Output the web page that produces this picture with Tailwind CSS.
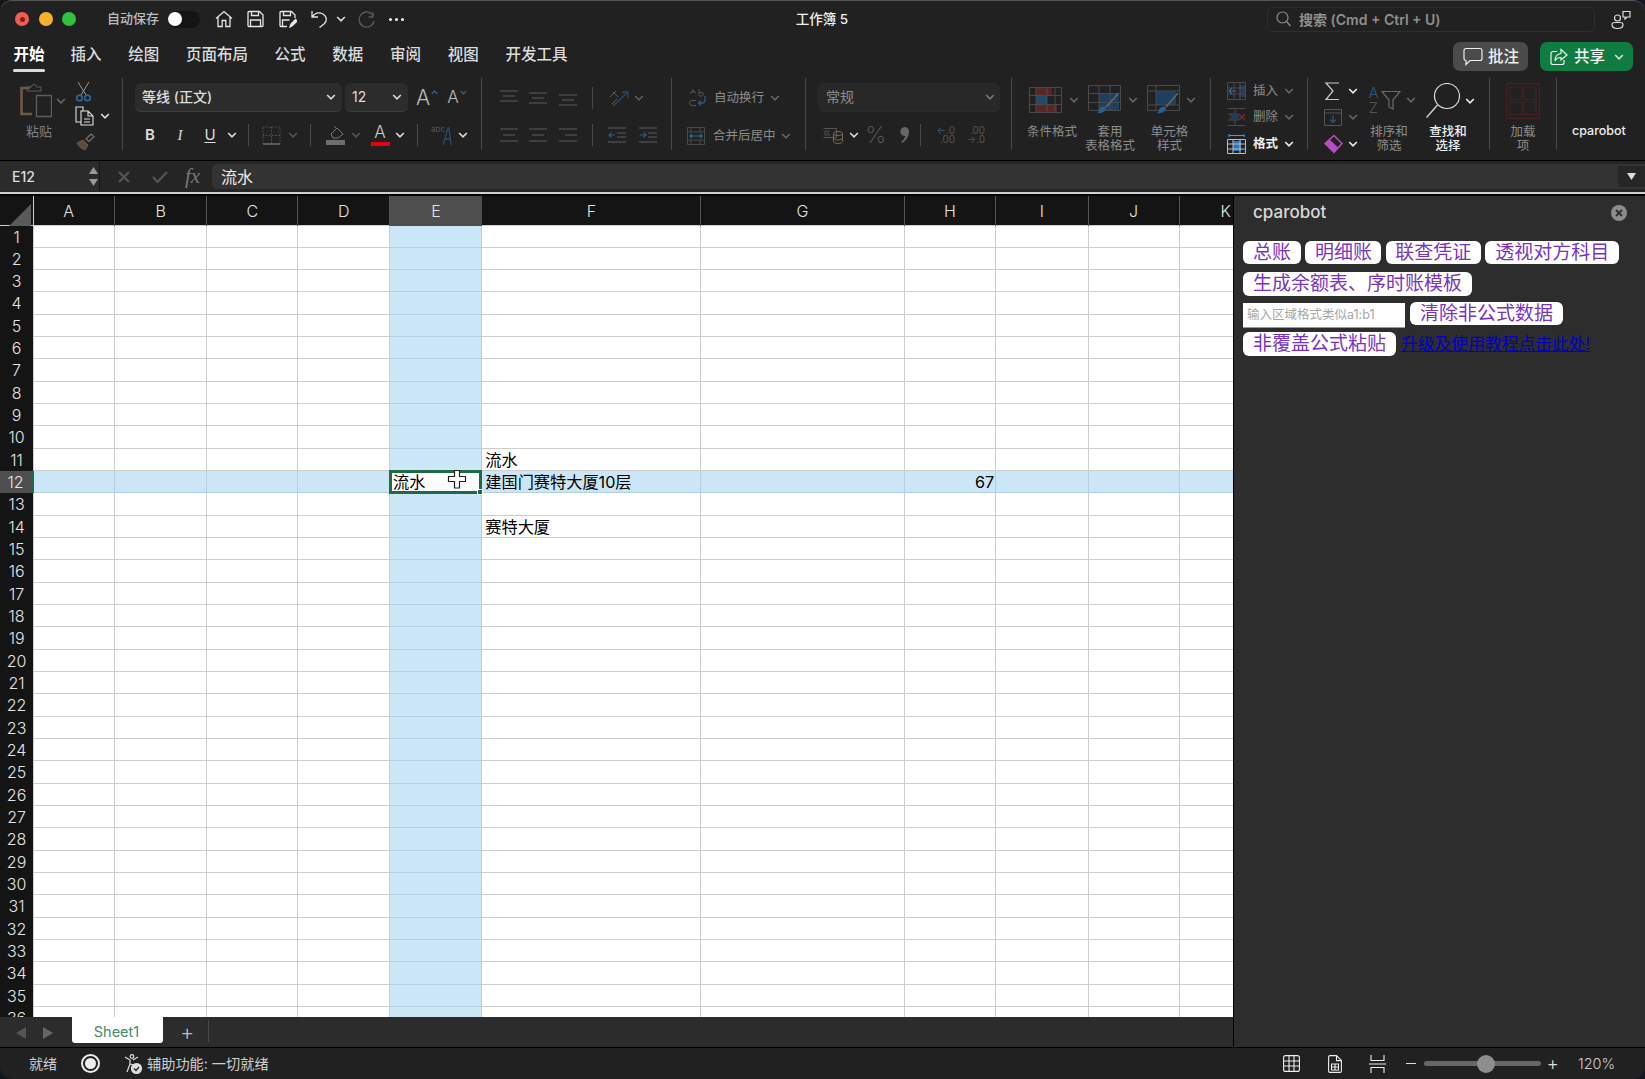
<!DOCTYPE html>
<html lang="zh">
<head>
<meta charset="utf-8">
<title>工作簿 5</title>
<script src="https://cdn.jsdelivr.net/npm/@tailwindcss/browser@4"></script>
</head>
<body class="m-0 overflow-hidden bg-[#10161c]">
<svg class="hidden"><symbol id="c" viewBox="0 0 10 6"><path d="M1.2 1l3.8 3.8L8.8 1" fill="none" stroke="currentColor" stroke-width="1.6"/></symbol>
<symbol id="l3" viewBox="0 0 18 18"><path d="M0 3h18M3 9h12M0 15h18" stroke="currentColor" fill="none"/></symbol></svg>
<div class="flex h-[1079px] w-[1645px] flex-col overflow-hidden rounded-[12px] border-t border-[#555] bg-[#212121] [font-family:Inter,'Noto_Sans_CJK_SC',sans-serif] text-[#ddd]">

<!-- title bar -->
<div class="flex h-[39px] shrink-0 items-center pb-[3px]">
  <div class="flex w-[410px] items-center">
    <span class="ml-[15px] flex h-[14px] w-[14px] items-center justify-center rounded-full bg-[#ec5f55]"><span class="h-[5px] w-[5px] rounded-full bg-[#8c1a10]"></span></span>
    <span class="ml-[9.5px] h-[14px] w-[14px] rounded-full bg-[#f5b22e]"></span>
    <span class="ml-[9.5px] h-[14px] w-[14px] rounded-full bg-[#2fc23f]"></span>
    <span class="ml-[31px] text-[13px] font-medium text-[#bdbdbd]">自动保存</span>
    <span class="ml-[9px] flex h-[17px] w-[32px] items-center rounded-full bg-[#141414]"><span class="h-[14px] w-[14px] rounded-full bg-white"></span></span>
    <svg class="ml-[15px]" width="18" height="18" viewBox="0 0 18 18" fill="none" stroke="#e6e6e6" stroke-width="1.3"><path d="M1 8.5L9 1.5l8 7M3 7v9.5h4.2v-6h3.6v6H15V7"/></svg>
    <svg class="ml-[14px]" width="17" height="18" viewBox="0 0 17 18" fill="none" stroke="#e6e6e6" stroke-width="1.3"><path d="M1 2.5a1 1 0 011-1h10.5L16 5v10.5a1 1 0 01-1 1H2a1 1 0 01-1-1zM4.5 1.5v4h7v-4M3.5 16.5v-6.500h10v6.500"/></svg>
    <svg class="ml-[15px]" width="18" height="18" viewBox="0 0 18 18" fill="none" stroke="#e6e6e6" stroke-width="1.3"><path d="M8 16.500H2a1 1 0 01-1-1V2.500a1 1 0 011-1h10.500L16 5v3M4.500 1.500v4h7v-4M3.500 16v-6h7"/><path d="M11 17l1-3 4.500-4.500 1.500 1.500-4.500 4.500z" fill="#e6e6e6"/></svg>
    <svg class="ml-[14px]" width="18" height="20" viewBox="0 0 18 20" fill="none" stroke="#e6e6e6" stroke-width="1.3"><path d="M1 2v6h6M1.500 7.500C4 4 8 3 12 5c4 2.500 4.500 7 1 10l-4.500 3.500"/></svg>
    <svg class="ml-[7px] text-[#ddd]" width="10" height="6"><use href="#c"/></svg>
    <svg class="ml-[12px]" width="18" height="18" viewBox="0 0 18 18" fill="none" stroke="#5a5a5a" stroke-width="1.3"><path d="M15 2.500V7h-4.500M15.500 6.500A7.500 7.500 0 1016 11"/></svg>
    <span class="ml-[13px] h-[3px] w-[3px] rounded-full bg-[#eee]"></span><span class="ml-[3px] h-[3px] w-[3px] rounded-full bg-[#eee]"></span><span class="ml-[3px] h-[3px] w-[3px] rounded-full bg-[#eee]"></span>
  </div>
  <div class="w-[824px] text-center text-[13.5px] font-medium text-[#eee]">工作簿 5</div>
  <div class="ml-[33px] flex h-[25px] w-[328px] items-center rounded-[5px] border border-[#2e2e2e] pl-[8px] text-[14px] font-semibold text-[#8f8f8f]">
    <svg width="15" height="16" viewBox="0 0 15 16" fill="none" stroke="#8f8f8f" stroke-width="1.2"><circle cx="6.500" cy="6.500" r="5.500"/><path d="M10.500 10.500L14.500 15"/></svg>
    <span class="ml-[8px]">搜索 (Cmd + Ctrl + U)</span>
  </div>
  <svg class="ml-[16px]" width="20" height="21" viewBox="0 0 20 21" fill="none" stroke="#ddd" stroke-width="1.2"><circle cx="6.500" cy="9" r="3"/><path d="M1 15.500c0-1 1-2 3-2h5c2 0 3 1 3 2 0 3-2.500 4-5.500 4S1 18.500 1 15.500zM12 2.500h7v5.500h-3l-2 2V8h-2z"/></svg>
</div>

<!-- tabs -->
<div class="flex h-[35px] shrink-0 items-start text-[15.5px] font-medium text-[#dcdcdc]">
  <div class="ml-[13px] mt-[4px] flex w-[32px] flex-col items-center font-semibold text-white"><span class="whitespace-nowrap leading-[22px]">开始</span><span class="mt-[3px] h-[3px] w-[32px] rounded-full bg-[#dcdcdc]"></span></div>
  <span class="ml-[25.500px] mt-[4px] leading-[22px]">插入</span>
  <span class="ml-[26.700px] mt-[4px] leading-[22px]">绘图</span>
  <span class="ml-[26.700px] mt-[4px] leading-[22px]">页面布局</span>
  <span class="ml-[26.700px] mt-[4px] leading-[22px]">公式</span>
  <span class="ml-[26.700px] mt-[4px] leading-[22px]">数据</span>
  <span class="ml-[26.700px] mt-[4px] leading-[22px]">审阅</span>
  <span class="ml-[26.700px] mt-[4px] leading-[22px]">视图</span>
  <span class="ml-[26.700px] mt-[4px] leading-[22px]">开发工具</span>
  <div class="ml-[886px] mt-[2px] flex h-[29px] w-[75px] items-center justify-center rounded-[7px] bg-[#4b4b4b] text-[#f0f0f0]">
    <svg width="20" height="19" viewBox="0 0 20 19" fill="none" stroke="#eee" stroke-width="1.2"><path d="M3 1.500h14a2 2 0 012 2v8a2 2 0 01-2 2H7l-4 4v-4a2 2 0 01-2-2v-8a2 2 0 012-2z"/></svg>
    <span class="ml-[5px] whitespace-nowrap">批注</span>
  </div>
  <div class="ml-[12px] mt-[2px] flex h-[29px] w-[93px] items-center justify-center rounded-[7px] bg-[#107c41] text-[#f4f4f4]">
    <svg width="18" height="18" viewBox="0 0 18 18" fill="none" stroke="#eee" stroke-width="1.2"><path d="M7 3.500H3a2 2 0 00-2 2v9a2 2 0 002 2h9a2 2 0 002-2V12M11 1.500l6 5.500-6 5V9.500C8 9.500 6 10.500 5 13c0-4 2-7 6-7.500z"/></svg>
    <span class="ml-[6px] whitespace-nowrap">共享</span>
    <svg class="ml-[9px] text-[#ddd]" width="10" height="6"><use href="#c"/></svg>
  </div>
</div>

<!-- ribbon -->
<div class="flex h-[85px] shrink-0 text-[12.5px] leading-[14px] text-[#8c8c8c]">
  <!-- clipboard -->
  <div class="mt-[3px] flex h-[72px] w-[123px] shrink-0 border-r border-[#484848]">
    <div class="ml-[20px] w-[32px] pt-[5px]">
      <svg width="32" height="36" viewBox="0 0 32 36" fill="none"><path d="M10 5H1.500v26H12" stroke="#6e5a44" stroke-width="2.500"/><path d="M7 8V4h4.500a2.500 2.500 0 015 0H21v4z" stroke="#5e5e5e"/><path d="M16.500 12.500h15v21h-15z" stroke="#5e5e5e" stroke-width="1.300"/></svg>
      <div class="ml-[6px] mt-[5px] whitespace-nowrap text-[13px] text-[#7f7f7f]">粘贴</div>
    </div>
    <svg class="ml-[4px] mt-[20px] text-[#666]" width="10" height="6"><use href="#c"/></svg>
    <div class="ml-[9px] w-[40px] text-[#ddd]">
      <svg class="mt-[4px]" width="17" height="20" viewBox="0 0 17 20" fill="none" stroke="#9a9a9a"><path d="M3 0l8 13M14 0L6 13"/><circle cx="4.500" cy="16" r="2.800" stroke="#2e6da4" stroke-width="1.500"/><circle cx="12.500" cy="16" r="2.800" stroke="#2e6da4" stroke-width="1.500"/></svg>
      <div class="mt-[4px] flex items-center">
        <svg width="20" height="20" viewBox="0 0 20 20" fill="none" stroke="#e0e0e0" stroke-width="1.100"><path d="M6 16H1V1h7v4M6 5h7l5 5v9H6zM13 5v5h5M9 13h6M9 16h6"/></svg>
        <svg class="ml-[5px]" width="10" height="6"><use href="#c"/></svg>
      </div>
      <svg class="mt-[7px]" width="20" height="18" viewBox="0 0 20 18" fill="none"><path d="M11 6l5-5 3 2.500-5 5z" stroke="#777" stroke-width="1.100"/><path d="M2 10l6-3 5 5-3 5c-3-1-6-3-8-7z" fill="#5e4c38" stroke="#6e5a44"/></svg>
    </div>
  </div>
  <!-- font -->
  <div class="mt-[3px] h-[72px] w-[359px] shrink-0 border-r border-[#484848]">
    <div class="mt-[5px] flex h-[29px] items-center">
      <div class="ml-[12px] flex h-[29px] w-[207px] items-center justify-between rounded-[6px] border-b border-[#3d3d3d] bg-[#2c2c2c] pl-[7px] pr-[6px] text-[14px] font-medium text-[#ddd]">等线 (正文)<svg width="10" height="6"><use href="#c"/></svg></div>
      <div class="ml-[3px] flex h-[29px] w-[63px] items-center justify-between rounded-[6px] border-b border-[#3d3d3d] bg-[#2c2c2c] pl-[7px] pr-[6px] text-[14px] text-[#ddd]">12<svg width="10" height="6"><use href="#c"/></svg></div>
      <span class="ml-[8px] text-[21px] font-light leading-none text-[#bbb]">A</span>
      <svg class="ml-[1px] mb-[10px] text-[#3d6a90]" width="7" height="5" viewBox="0 0 10 6"><path d="M1 5l4-4 4 4" fill="none" stroke="currentColor" stroke-width="1.600"/></svg>
      <span class="ml-[9px] text-[17px] font-light leading-none text-[#bbb]">A</span>
      <svg class="ml-[1px] mb-[10px] text-[#3d6a90]" width="7" height="5"><use href="#c"/></svg>
    </div>
    <div class="mt-[9px] flex h-[28px] items-center text-[#ddd]">
      <span class="ml-[17px] w-[20px] text-center text-[15px] font-semibold">B</span>
      <span class="ml-[10px] w-[20px] text-center text-[15px] italic [font-family:'Liberation_Serif',serif]">I</span>
      <span class="ml-[10px] w-[20px] text-center text-[15px] underline underline-offset-2">U</span>
      <svg class="ml-[7px]" width="10" height="6"><use href="#c"/></svg>
      <span class="ml-[11px] h-[22px] w-px bg-[#484848]"></span>
      <svg class="ml-[13px]" width="19" height="19" viewBox="0 0 19 19" fill="none" stroke="#555"><path d="M1 1h17v17H1zM9.500 1v17M1 9.500h17" stroke-dasharray="1.500 1.500"/><path d="M1 18h17" stroke-width="1.500" stroke="#6a6a6a" stroke-dasharray="none"/></svg>
      <svg class="ml-[7px] text-[#555]" width="10" height="6"><use href="#c"/></svg>
      <span class="ml-[12px] h-[22px] w-px bg-[#484848]"></span>
      <svg class="ml-[15px]" width="19" height="20" viewBox="0 0 19 20" fill="none"><path d="M5 9l6-6 6 6-5 4H7z" stroke="#777"/><path d="M8 1l3 3" stroke="#777"/><rect y="15" width="19" height="5" fill="#6e6e6e"/></svg>
      <svg class="ml-[6px] text-[#555]" width="10" height="6"><use href="#c"/></svg>
      <div class="ml-[9px] flex w-[20px] flex-col items-center"><span class="text-[17px] font-light leading-[15px] text-[#ccc]">A</span><span class="mt-[2px] h-[4px] w-[19px] bg-[#e8000e]"></span></div>
      <svg class="ml-[5px]" width="10" height="6"><use href="#c"/></svg>
      <span class="ml-[12px] h-[22px] w-px bg-[#484848]"></span>
      <div class="ml-[14px] flex h-[22px] w-[20px] items-start justify-end text-[8px] leading-[10px] text-[#555]">abc<svg class="mt-[3px] -ml-[3px] shrink-0" width="10" height="18" viewBox="0 0 10 18" fill="none" stroke="#2a4a66" stroke-width="1.300"><path d="M1 18L6 1h1l2 17M3 12h6"/></svg></div>
      <svg class="ml-[6px]" width="10" height="6"><use href="#c"/></svg>
    </div>
  </div>
  <!-- align -->
  <div class="mt-[3px] h-[72px] w-[190px] shrink-0 border-r border-[#484848] text-[#5c5c5c]">
    <div class="mt-[5px] flex h-[29px] items-center">
      <svg class="ml-[18px]" width="18" height="18" viewBox="0 0 18 18" fill="none" stroke="currentColor"><path d="M0 2h18M3 7h12M0 12h18"/></svg>
      <svg class="ml-[11px]" width="18" height="18" viewBox="0 0 18 18" fill="none" stroke="currentColor"><path d="M0 4h18M3 9h12M0 14h18"/></svg>
      <svg class="ml-[12px]" width="18" height="18" viewBox="0 0 18 18" fill="none" stroke="currentColor"><path d="M0 6h18M3 11h12M0 16h18"/></svg>
      <span class="ml-[15px] h-[22px] w-px bg-[#484848]"></span>
      <svg class="ml-[16px]" width="20" height="20" viewBox="0 0 20 20" fill="none" stroke="#5c5c5c"><path d="M1 9l6-6M4 4l5 5M3 16l5-5" /><path d="M4 18L18 5M13 4h6v6" stroke="#2a4a66" stroke-width="1.300"/></svg>
      <svg class="ml-[5px]" width="10" height="6"><use href="#c"/></svg>
    </div>
    <div class="mt-[9px] flex h-[28px] items-center">
      <svg class="ml-[18px]" width="18" height="18"><use href="#l3"/></svg>
      <svg class="ml-[11px]" width="18" height="18" viewBox="0 0 18 18" fill="none" stroke="currentColor"><path d="M0 3h18M3 9h12M0 15h18"/></svg>
      <svg class="ml-[12px]" width="18" height="18" viewBox="0 0 18 18" fill="none" stroke="currentColor"><path d="M0 3h18M6 9h12M0 15h18"/></svg>
      <span class="ml-[15px] h-[22px] w-px bg-[#484848]"></span>
      <svg class="ml-[15px]" width="18" height="18" viewBox="0 0 18 18" fill="none" stroke="currentColor"><path d="M0 2h18M9 7h9M9 11h9M0 16h18"/><path d="M7 9H1M3.500 6.500L1 9l2.500 2.500" stroke="#2e5a80" stroke-width="1.200"/></svg>
      <svg class="ml-[13px]" width="18" height="18" viewBox="0 0 18 18" fill="none" stroke="currentColor"><path d="M0 2h18M9 7h9M9 11h9M0 16h18"/><path d="M1 9h6M4.500 6.500L7 9l-2.500 2.500" stroke="#2e5a80" stroke-width="1.200"/></svg>
    </div>
  </div>
  <!-- wrap -->
  <div class="mt-[3px] h-[72px] w-[133.500px] shrink-0 border-r border-[#484848] text-[#8c8c8c]">
    <div class="mt-[5px] flex h-[29px] items-center">
      <svg class="ml-[16px] shrink-0" width="19" height="20" viewBox="0 0 19 20" fill="none" stroke="#555"><path d="M2 5.500l3-4 3 4M3 4h4" /><path d="M11 1v7M11 4.500h3a1.800 1.800 0 010 3.500h-3M8 12.500H4a2.500 2.500 0 000 5h4"/><path d="M17 8v4a3 3 0 01-3 3h-3M13 12.500L10.500 15l2.500 2.500" stroke="#2a5a80" stroke-width="1.300"/></svg>
      <span class="ml-[7px] w-[50px] whitespace-nowrap">自动换行</span>
      <svg class="ml-[6px] shrink-0 text-[#666]" width="10" height="6"><use href="#c"/></svg>
    </div>
    <div class="mt-[10px] flex h-[28px] items-center">
      <svg class="ml-[15px]" width="18" height="18" viewBox="0 0 18 18" fill="none" stroke="#4a4a4a"><path d="M.5.500h17v17H.5zM0 5h18M0 13h18M4 0v5M13 0v5M4 13v5M13 13v5"/><path d="M3 9h12M5 7L3 9l2 2M13 7l2 2-2 2" stroke="#2e6da4" stroke-width="1.200"/></svg>
      <span class="ml-[8px] w-[63px] whitespace-nowrap">合并后居中</span>
      <svg class="ml-[5px] text-[#666]" width="10" height="6"><use href="#c"/></svg>
    </div>
  </div>
  <!-- number -->
  <div class="mt-[3px] h-[72px] w-[206.500px] shrink-0 border-r border-[#484848]">
    <div class="mt-[5px] flex h-[29px] items-center">
      <div class="ml-[12.500px] flex h-[29px] w-[182px] items-center justify-between rounded-[6px] border-b border-[#2c2c2c] bg-[#282828] pl-[8px] pr-[5px] text-[14px] text-[#8c8c8c]">常规<svg class="text-[#777]" width="10" height="6"><use href="#c"/></svg></div>
    </div>
    <div class="mt-[9px] flex h-[28px] items-center">
      <svg class="ml-[17px]" width="20" height="18" viewBox="0 0 20 18" fill="none"><path d="M.5 2.500h13v9H.5" stroke="#555"/><path d="M4 5H2v4h2M7 5H5v4h2" stroke="#555"/><ellipse cx="15" cy="7.500" rx="4.500" ry="2" stroke="#7c6a48"/><path d="M10.500 7.500v8c0 1 2 2 4.500 2s4.500-1 4.500-2v-8M10.500 12c0 1 2 2 4.500 2s4.500-1 4.500-2" stroke="#7c6a48"/></svg>
      <svg class="ml-[6px] text-[#ddd]" width="10" height="6"><use href="#c"/></svg>
      <span class="ml-[7px] text-[23px] font-extralight leading-none text-[#5f5f5f]">%</span>
      <svg class="ml-[14px]" width="10" height="16" viewBox="0 0 10 16"><path d="M4.500 0a4.500 4.500 0 014.500 4.500C9 9.500 6 14 2 16l-.8-1C3.500 13 5 11 5.300 9A4.500 4.500 0 114.500 0z" fill="#666"/></svg>
      <span class="ml-[10px] h-[22px] w-px bg-[#484848]"></span>
      <div class="ml-[14px] w-[20px] whitespace-nowrap text-right text-[10px] leading-[9px] text-[#555]"><span class="text-[#2e5a80]">←</span>.0<br>.00</div>
      <div class="ml-[10px] w-[20px] whitespace-nowrap text-right text-[10px] leading-[9px] text-[#555]">.00<br><span class="text-[#2e5a80]">→</span>.0</div>
    </div>
  </div>
  <!-- styles -->
  <div class="mt-[3px] flex h-[72px] w-[199px] shrink-0 border-r border-[#484848] text-center">
    <div class="ml-[10px] w-[60px]">
      <div class="mt-[9px] flex h-[26px] items-center">
        <svg class="ml-[7px] shrink-0" width="33" height="26" viewBox="0 0 33 26" fill="none" stroke="#4a4a4a"><path fill="#5a2623" stroke="none" d="M7 0h16v9H7zM7 17h21v9H7z"/><path fill="#244a6a" stroke="none" d="M7 9h11v8H7z"/><path d="M.5.500h32v25H.5zM0 8.500h33M0 17.500h33M7 0v26M18 0v26M26 0v26"/></svg>
        <svg class="ml-[7px] shrink-0 text-[#666]" width="10" height="6"><use href="#c"/></svg>
      </div>
      <div class="mt-[12px] whitespace-nowrap">条件格式</div>
    </div>
    <div class="w-[56px]">
      <div class="mt-[9px] flex h-[26px] items-center">
        <svg class="ml-[6px] shrink-0" width="33" height="30" viewBox="0 0 33 30" fill="none" stroke="#4a4a4a"><path fill="#1d3f60" stroke="none" d="M11 9h20v17H11z"/><path d="M.5.500h32v25H.5zM0 8.500h33M0 17.500h33M11 0v26M22 0v26"/><path d="M30 9L18 22" stroke="#6a6a6a" stroke-width="1.500"/><path d="M11 24c3-3 6-3 7-1 0 3-4 6-9 5 2-1 2-2 2-4z" fill="#28608f" stroke="none"/></svg>
        <svg class="ml-[7px] shrink-0 text-[#666]" width="10" height="6"><use href="#c"/></svg>
      </div>
      <div class="mt-[12px] whitespace-nowrap">套用<br>表格格式</div>
    </div>
    <div class="ml-[3px] w-[57px]">
      <div class="mt-[9px] flex h-[26px] items-center">
        <svg class="ml-[6px] shrink-0" width="34" height="30" viewBox="0 0 34 30" fill="none" stroke="#4a4a4a"><path fill="#1d3f60" stroke="none" d="M9 6h20v14H9z"/><path d="M.5.500h32v25H.5zM0 6h33M9 0v26M0 20h33"/><path d="M31 8L19 22" stroke="#6a6a6a" stroke-width="1.500"/><path d="M12 24c3-3 6-3 7-1 0 3-4 6-9 5 2-1 2-2 2-4z" fill="#28608f" stroke="none"/></svg>
        <svg class="ml-[5px] shrink-0 text-[#666]" width="10" height="6"><use href="#c"/></svg>
      </div>
      <div class="mt-[12px] whitespace-nowrap">单元格<br>样式</div>
    </div>
  </div>
  <!-- cells -->
  <div class="mt-[3px] h-[72px] w-[97px] shrink-0 border-r border-[#484848]">
    <div class="flex h-[26px] items-center">
      <svg class="ml-[16px]" width="19" height="18" viewBox="0 0 19 18" fill="none" stroke="#4a4a4a"><path fill="#1f3d58" stroke="none" d="M12 3h6v12h-6z"/><path d="M.5.500h18v17H.5zM0 6h19M0 12h19M7 0v18M13 0v18"/><path d="M10 9H2M5 6L2 9l3 3" stroke="#2e6da4" stroke-width="1.200"/></svg>
      <span class="ml-[7px] w-[26px] whitespace-nowrap">插入</span>
      <svg class="ml-[5px] text-[#666]" width="10" height="6"><use href="#c"/></svg>
    </div>
    <div class="flex h-[26px] items-center">
      <svg class="ml-[16px]" width="19" height="18" viewBox="0 0 19 18" fill="none" stroke="#4a4a4a"><path d="M.5.500h18M.5 17.500h18M.5 6h11M.5 12h11M4 6v6M8 0v6M8 12v6"/><path fill="#1f3d58" stroke="none" d="M5 6h7v6H5z"/><path d="M12 6l6 6M18 6l-6 6" stroke="#7c2c28" stroke-width="1.300"/></svg>
      <span class="ml-[7px] w-[26px] whitespace-nowrap">删除</span>
      <svg class="ml-[5px] text-[#666]" width="10" height="6"><use href="#c"/></svg>
    </div>
    <div class="mt-[1px] flex h-[26px] items-center font-semibold text-[#eee]">
      <svg class="ml-[16px]" width="19" height="20" viewBox="0 0 19 20" fill="none" stroke="#bbb"><path fill="#1c78c8" stroke="none" d="M6 7h8v10H6z"/><path d="M.5 5.500h18v14H.5zM0 10h19M0 15h19M6 5v15M13 5v15"/><path d="M2 1.500h15M2 0v3M17 0v3" stroke="#3aa0e0"/></svg>
      <span class="ml-[7px] w-[26px] whitespace-nowrap">格式</span>
      <svg class="ml-[5px] text-[#eee]" width="10" height="6"><use href="#c"/></svg>
    </div>
  </div>
  <!-- editing -->
  <div class="mt-[3px] flex h-[72px] w-[182px] shrink-0 border-r border-[#484848]">
    <div class="ml-[15px]">
      <div class="flex h-[26px] items-center"><svg width="20" height="19" viewBox="0 0 20 19" fill="none" stroke="#ccc" stroke-width="1.200"><path d="M16 1H3l7 8-7 8.500h13"/></svg><svg class="ml-[5px] text-[#eee]" width="10" height="6"><use href="#c"/></svg></div>
      <div class="flex h-[26px] items-center"><svg width="20" height="19" viewBox="0 0 20 19" fill="none" stroke="#555"><path d="M1.500 1.500h17v16h-17zM1 5h18"/><path d="M10 7.500v7M7 11.500l3 3 3-3" stroke="#2e5a80" stroke-width="1.200"/></svg><svg class="ml-[5px] text-[#666]" width="10" height="6"><use href="#c"/></svg></div>
      <div class="mt-[1px] flex h-[26px] items-center"><svg width="20" height="20" viewBox="0 0 20 20" fill="none"><path d="M11 1.500l8 8-8 9-9-9z" stroke="#b84fc0" stroke-width="1.500"/><path d="M6.500 5.500l8.500 8-4 5-9-9z" fill="#b84fc0"/></svg><svg class="ml-[5px] text-[#eee]" width="10" height="6"><use href="#c"/></svg></div>
    </div>
    <div class="ml-[4px] w-[54px] text-center">
      <div class="mt-[7px] flex h-[30px] items-center">
        <div class="ml-[5px] w-[13px] text-center text-[15px] font-light leading-[15px] text-[#555]"><span class="text-[#2e5a80]">A</span><br>Z</div>
        <svg class="ml-[1px]" width="20" height="20" viewBox="0 0 20 20" fill="none" stroke="#6a6a6a" stroke-width="1.200"><path d="M1 1.500h18L12 10v9l-4-2v-7z"/></svg>
        <svg class="ml-[5px] text-[#666]" width="10" height="6"><use href="#c"/></svg>
      </div>
      <div class="mt-[10px] whitespace-nowrap">排序和<br>筛选</div>
    </div>
    <div class="ml-[4px] w-[56px] text-center font-medium text-[#eee]">
      <div class="mt-[5px] flex h-[35px] items-start">
        <svg class="ml-[6px] shrink-0" width="34" height="35" viewBox="0 0 34 35" fill="none" stroke="#ddd" stroke-width="1.200"><circle cx="21" cy="13" r="12.500"/><path d="M11.500 22L.5 34.500"/></svg>
        <svg class="ml-[5px] mt-[15px] shrink-0" width="10" height="6"><use href="#c"/></svg>
      </div>
      <div class="mt-[7px] whitespace-nowrap">查找和<br>选择</div>
    </div>
  </div>
  <!-- add-in -->
  <div class="mt-[3px] h-[72px] w-[67px] shrink-0 border-r border-[#484848] text-center">
    <svg class="ml-[16px] mt-[5px]" width="34" height="36" viewBox="0 0 34 36" fill="none" stroke="#46221f" stroke-width="1.200"><path d="M.6.600h32.800v34.800H.6zM4 4h12v12.500H4zM18 4h12v12.500H18zM4 19h12v12.500H4zM18 19h12v12.500H18z"/></svg>
    <div class="mt-[6px] whitespace-nowrap">加载<br>项</div>
  </div>
  <div class="mt-[3px] h-[72px] pl-[15px] text-[12.5px] font-medium text-[#eee]"><div class="mt-[46px]">cparobot</div></div>
</div>

<div class="h-px shrink-0 bg-black"></div>

<!-- formula bar -->
<div class="flex h-[31px] shrink-0 items-center bg-[#252525]">
  <div class="flex h-[29px] w-[100px] shrink-0 items-center justify-between border-r border-[#141414] bg-[#2b2b2b] pl-[12px] pr-[1px] text-[14px] font-medium text-[#ddd]">
    E12
    <div class="flex flex-col gap-[5px]"><svg width="9" height="7" viewBox="0 0 9 7"><path d="M4.500 0l4.500 7H0z" fill="#999"/></svg><svg width="9" height="7" viewBox="0 0 9 7"><path d="M4.500 7L0 0h9z" fill="#999"/></svg></div>
  </div>
  <svg class="ml-[18px]" width="12" height="12" viewBox="0 0 12 12" stroke="#555" stroke-width="2.200"><path d="M1 1l10 10M11 1L1 11"/></svg>
  <svg class="ml-[22px]" width="16" height="12" viewBox="0 0 16 12" fill="none" stroke="#555" stroke-width="2.200"><path d="M1 6l4.500 5L15 1"/></svg>
  <span class="ml-[17px] w-[17px] text-[21px] italic text-[#777] [font-family:'Liberation_Serif',serif]">fx</span>
  <div class="ml-[10px] flex h-[25px] min-w-0 flex-1 items-center rounded-l-[5px] bg-[#333] pl-[9px] text-[16px] text-[#eee]">流水
    <div class="ml-auto flex h-[21px] w-[27px] items-center justify-center bg-[#262626]"><svg width="9" height="7" viewBox="0 0 9 7"><path d="M4.500 7L0 0h9z" fill="#ddd"/></svg></div>
  </div>
</div>
<div class="h-[2px] shrink-0 bg-[#cfcfcf]"></div>
<div class="h-[1.500px] shrink-0 bg-black"></div>

<!-- main -->
<div class="flex min-h-0 flex-1">
  <div class="flex w-[1233px] shrink-0 flex-col overflow-hidden">
    <div class="h-[821.500px] shrink-0 overflow-hidden bg-white text-black">
      <!-- column headers -->
      <div class="grid h-[30px] w-[1271px] grid-cols-[34.200px_80.900px_92.300px_91.100px_91.500px_92.300px_219.200px_203.200px_91.600px_92.400px_91px_92px] border-b border-[#cfcfcf] bg-[#141414] text-center text-[16px] font-light leading-[31px] text-[#e4e4e4]">
        <div class="flex items-end justify-end border-r border-[#cfcfcf] pb-[2px] pr-[2px]"><svg width="24" height="24" viewBox="0 0 24 24"><path d="M24 0v24H0z" fill="#5a5a5a"/></svg></div>
        <div class="border-r border-[#555] pr-[11px]">A</div><div class="border-r border-[#555]">B</div><div class="border-r border-[#555]">C</div><div class="border-r border-[#555]">D</div>
        <div class="border-b-[3px] border-[#1e6b45] bg-[#4e4e4e]">E</div>
        <div class="border-r border-[#555]">F</div><div class="border-r border-[#555]">G</div><div class="border-r border-[#555]">H</div><div class="border-r border-[#555]">I</div><div class="border-r border-[#555]">J</div><div>K</div>
      </div>
      <!-- cells -->
      <div class="relative grid w-[1271px] grid-cols-[34.200px_80.900px_92.300px_91.100px_91.500px_92.300px_219.200px_203.200px_91.600px_92.400px_91px_92px] auto-rows-[22.340px] overflow-hidden whitespace-nowrap text-[16.200px] leading-[22px] [&>*]:border-r [&>*]:border-b [&>*]:border-[#cecece] [&>*:nth-child(12n+1)]:border-b-0 [&>*:nth-child(12n+1)]:border-r-[#cfcfcf] [&>*:nth-child(12n+1)]:bg-[#141414] [&>*:nth-child(12n+1)]:text-center [&>*:nth-child(12n+1)]:text-[16px] [&>*:nth-child(12n+1)]:font-light [&>*:nth-child(12n+1)]:text-[#e4e4e4] [&>*:nth-child(12n+6)]:border-[#b0d0e6] [&>*:nth-child(12n+6)]:bg-[#cbe6f7] [&>*:nth-child(n+134):nth-child(-n+144)]:border-[#b0d0e6] [&>*:nth-child(n+134):nth-child(-n+144)]:bg-[#cbe6f7]">
        <p>1</p><p></p><p></p><p></p><p></p><p></p><p></p><p></p><p></p><p></p><p></p><p></p>
        <p>2</p><p></p><p></p><p></p><p></p><p></p><p></p><p></p><p></p><p></p><p></p><p></p>
        <p>3</p><p></p><p></p><p></p><p></p><p></p><p></p><p></p><p></p><p></p><p></p><p></p>
        <p>4</p><p></p><p></p><p></p><p></p><p></p><p></p><p></p><p></p><p></p><p></p><p></p>
        <p>5</p><p></p><p></p><p></p><p></p><p></p><p></p><p></p><p></p><p></p><p></p><p></p>
        <p>6</p><p></p><p></p><p></p><p></p><p></p><p></p><p></p><p></p><p></p><p></p><p></p>
        <p>7</p><p></p><p></p><p></p><p></p><p></p><p></p><p></p><p></p><p></p><p></p><p></p>
        <p>8</p><p></p><p></p><p></p><p></p><p></p><p></p><p></p><p></p><p></p><p></p><p></p>
        <p>9</p><p></p><p></p><p></p><p></p><p></p><p></p><p></p><p></p><p></p><p></p><p></p>
        <p>10</p><p></p><p></p><p></p><p></p><p></p><p></p><p></p><p></p><p></p><p></p><p></p>
        <p>11</p><p></p><p></p><p></p><p></p><p></p><p class="pl-[3px]">流水</p><p></p><p></p><p></p><p></p><p></p>
        <p class="bg-[#4e4e4e]! border-r-[3px]! border-r-[#1e6b45]!">12</p><p></p><p></p><p></p><p></p><p class="relative z-10 -ml-px -mt-px h-[24px]! border-[3px]! border-[#1e6b45]! bg-white! pl-[1px] leading-[19px]!">流水<span class="absolute -bottom-[3.500px] -right-[3.500px] h-[6px] w-[6px] border border-white bg-[#1e6b45]"></span><svg class="absolute left-[55px] top-[-4px]" width="20" height="20" viewBox="0 0 20 20"><path d="M7.500 1.500h5v6h6v5h-6v6.500h-5v-6.500h-6v-5h6z" fill="#fff" stroke="#222" stroke-width="1.200"/></svg></p><p class="pl-[3px]">建国门赛特大厦10层</p><p></p><p class="pr-[1px] text-right">67</p><p></p><p></p><p></p>
        <p>13</p><p></p><p></p><p></p><p></p><p></p><p></p><p></p><p></p><p></p><p></p><p></p>
        <p>14</p><p></p><p></p><p></p><p></p><p></p><p class="pl-[3px]">赛特大厦</p><p></p><p></p><p></p><p></p><p></p>
        <p>15</p><p></p><p></p><p></p><p></p><p></p><p></p><p></p><p></p><p></p><p></p><p></p>
        <p>16</p><p></p><p></p><p></p><p></p><p></p><p></p><p></p><p></p><p></p><p></p><p></p>
        <p>17</p><p></p><p></p><p></p><p></p><p></p><p></p><p></p><p></p><p></p><p></p><p></p>
        <p>18</p><p></p><p></p><p></p><p></p><p></p><p></p><p></p><p></p><p></p><p></p><p></p>
        <p>19</p><p></p><p></p><p></p><p></p><p></p><p></p><p></p><p></p><p></p><p></p><p></p>
        <p>20</p><p></p><p></p><p></p><p></p><p></p><p></p><p></p><p></p><p></p><p></p><p></p>
        <p>21</p><p></p><p></p><p></p><p></p><p></p><p></p><p></p><p></p><p></p><p></p><p></p>
        <p>22</p><p></p><p></p><p></p><p></p><p></p><p></p><p></p><p></p><p></p><p></p><p></p>
        <p>23</p><p></p><p></p><p></p><p></p><p></p><p></p><p></p><p></p><p></p><p></p><p></p>
        <p>24</p><p></p><p></p><p></p><p></p><p></p><p></p><p></p><p></p><p></p><p></p><p></p>
        <p>25</p><p></p><p></p><p></p><p></p><p></p><p></p><p></p><p></p><p></p><p></p><p></p>
        <p>26</p><p></p><p></p><p></p><p></p><p></p><p></p><p></p><p></p><p></p><p></p><p></p>
        <p>27</p><p></p><p></p><p></p><p></p><p></p><p></p><p></p><p></p><p></p><p></p><p></p>
        <p>28</p><p></p><p></p><p></p><p></p><p></p><p></p><p></p><p></p><p></p><p></p><p></p>
        <p>29</p><p></p><p></p><p></p><p></p><p></p><p></p><p></p><p></p><p></p><p></p><p></p>
        <p>30</p><p></p><p></p><p></p><p></p><p></p><p></p><p></p><p></p><p></p><p></p><p></p>
        <p>31</p><p></p><p></p><p></p><p></p><p></p><p></p><p></p><p></p><p></p><p></p><p></p>
        <p>32</p><p></p><p></p><p></p><p></p><p></p><p></p><p></p><p></p><p></p><p></p><p></p>
        <p>33</p><p></p><p></p><p></p><p></p><p></p><p></p><p></p><p></p><p></p><p></p><p></p>
        <p>34</p><p></p><p></p><p></p><p></p><p></p><p></p><p></p><p></p><p></p><p></p><p></p>
        <p>35</p><p></p><p></p><p></p><p></p><p></p><p></p><p></p><p></p><p></p><p></p><p></p>
        <p>36</p><p></p><p></p><p></p><p></p><p></p><p></p><p></p><p></p><p></p><p></p><p></p>
      </div>
    </div>
    <!-- sheet tabs -->
    <div class="flex min-h-0 flex-1 items-start bg-[#2c2c2c] text-[15px]">
      <svg class="ml-[16px] mt-[10px]" width="10" height="12" viewBox="0 0 10 12"><path d="M10 0v12L0 6z" fill="#555"/></svg>
      <svg class="ml-[17px] mt-[10px]" width="10" height="12" viewBox="0 0 10 12"><path d="M0 0v12l10-6z" fill="#666"/></svg>
      <div class="ml-[19px] flex h-[26px] w-[91px] items-center justify-center rounded-b-[3px] bg-white pr-[2px] pt-[4px] text-[14.500px] text-[#4a8a6c]">Sheet1</div>
      <span class="ml-[17px] mt-[4px] text-[22px] font-light leading-[22px] text-[#bbb]">+</span>
      <span class="ml-[14px] mt-[3px] h-[22px] w-px bg-[#484848]"></span>
    </div>
  </div>
  <!-- task pane -->
  <div class="min-w-0 flex-1 border-l border-black bg-[#2d2d2d] pl-[9px]">
    <div class="flex h-[35px] items-center pl-[10px] pr-[18px] text-[17px] font-medium text-[#d8d8d8]">cparobot
      <span class="ml-auto flex h-[16px] w-[16px] items-center justify-center rounded-full bg-[#8c8c8c]"><svg width="8" height="8" viewBox="0 0 8 8" stroke="#2d2d2d" stroke-width="1.800"><path d="M1 1l6 6M7 1L1 7"/></svg></span>
    </div>
    <div class="mt-[10px] flex h-[23px] gap-[4.400px] text-[19px] leading-[23px] text-[#7a34c2]">
      <span class="rounded-[6px] bg-white px-[10px]">总账</span><span class="rounded-[6px] bg-white px-[9.500px]">明细账</span><span class="rounded-[6px] bg-white px-[9.500px]">联查凭证</span><span class="rounded-[6px] bg-white px-[10px]">透视对方科目</span>
    </div>
    <div class="mt-[8px] flex h-[24px] text-[19px] leading-[24px] text-[#7a34c2]">
      <span class="rounded-[6px] bg-white px-[10px]">生成余额表、序时账模板</span>
    </div>
    <div class="mt-[6px] flex h-[26px] items-start gap-[5px] text-[19px] leading-[23px] text-[#7a34c2]">
      <div class="mt-[1px] flex h-[25px] w-[162px] items-center border-b border-[#999] bg-white pl-[4px] text-[12.500px] text-[#a8a8a8]">输入区域格式类似a1:b1</div>
      <span class="rounded-[6px] bg-white px-[10px]">清除非公式数据</span>
    </div>
    <div class="mt-[4px] flex h-[24px] items-center text-[19px] leading-[24px]">
      <span class="rounded-[6px] bg-white px-[10px] text-[#7a34c2]">非覆盖公式粘贴</span>
      <a class="ml-[5px] whitespace-nowrap text-[16.800px] text-[#0000c8] underline" href="#">升级及使用教程点击此处!</a>
    </div>
  </div>
</div>

<div class="h-px shrink-0 bg-black"></div>

<!-- status bar -->
<div class="flex h-[31px] shrink-0 items-center text-[14px] text-[#cfcfcf]">
  <span class="ml-[29px]">就绪</span>
  <span class="ml-[24px] flex h-[19px] w-[19px] items-center justify-center rounded-full border-2 border-[#eee]"><span class="h-[11px] w-[11px] rounded-full bg-[#eee]"></span></span>
  <svg class="ml-[24px]" width="18" height="20" viewBox="0 0 18 20" fill="none" stroke="#ddd" stroke-width="1.200"><circle cx="8" cy="2.500" r="1.800"/><path d="M1 3l5 3v4l-3 8M14 3l-5 3M6 10l4 1"/><circle cx="12.500" cy="14.500" r="5" fill="#ddd"/><path d="M10 14.500l2 2 3-3.500" stroke="#222"/></svg>
  <span class="ml-[5px] text-[14.200px]">辅助功能: 一切就绪</span>
  <svg class="ml-[1014px]" width="17" height="17" viewBox="0 0 17 17" fill="none" stroke="#eee" stroke-width="1.100"><rect x=".6" y=".6" width="15.800" height="15.800" rx="2"/><path d="M0 6h17M0 11h17M6 0v17M11 0v17"/></svg>
  <svg class="ml-[28px]" width="14" height="18" viewBox="0 0 14 18" fill="none" stroke="#eee" stroke-width="1.100"><path d="M.6 2a1.400 1.400 0 011.400-1.400h6.500L13.400 5.500V16a1.400 1.400 0 01-1.400 1.400H2A1.400 1.400 0 01.6 16zM8.500.6v5h5M3.500 9h7v6h-7zM3.500 12h7M7 9v6"/></svg>
  <svg class="ml-[27px]" width="17" height="18" viewBox="0 0 17 18" fill="none" stroke="#eee" stroke-width="1.100"><path d="M2 0v5.500h13V0M2 18v-5.500h13V18M0 9h17" stroke-dasharray="none"/></svg>
  <span class="ml-[20px] h-[1.500px] w-[10px] bg-[#ddd]"></span>
  <div class="ml-[8px] flex h-[5px] w-[117px] items-center rounded-full bg-[#666]"><span class="ml-[53px] h-[18px] w-[18px] rounded-full bg-[#8e8e8e]"></span></div>
  <span class="ml-[6px] text-[19px] font-light leading-none text-[#ddd]">+</span>
  <span class="ml-[19px] text-[14.500px] font-light">120%</span>
</div>
</div>
</body>
</html>
